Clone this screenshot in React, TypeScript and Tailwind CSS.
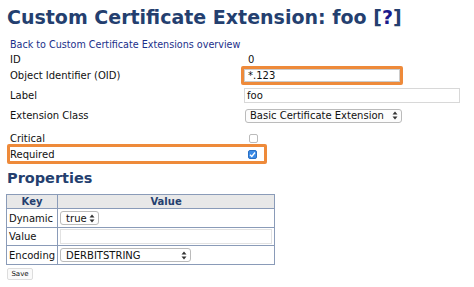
import React from "react";

const Updown = () => (
  <svg width="6" height="9" viewBox="0 0 6 9" className="shrink-0">
    <path d="M0.5 3.5 L3 0.5 L5.5 3.5 Z" fill="#333" />
    <path d="M0.5 5.5 L3 8.5 L5.5 5.5 Z" fill="#333" />
  </svg>
);

export default function App() {
  return (
    <div className="w-[474px] h-[287px] bg-white overflow-hidden font-['DejaVu_Sans',sans-serif] text-[#111] relative">
      <h1 className="pl-[7px] pt-[4px] text-[19px] leading-[26px] font-bold text-[#243f6f] whitespace-nowrap">
        Custom Certificate Extension: foo [<span className="text-[#1a1a8c]">?</span>]
      </h1>
      <div className="pl-[10px] mt-[8px] text-[9.6px] leading-[13px] text-[#1b2f8a] whitespace-nowrap">
        Back to Custom Certificate Extensions overview
      </div>
      <div className="grid grid-cols-[236px_1fr] pl-[10px] mt-[2px] text-[10px] leading-[13px]">
        <div className="h-[12px] flex items-center">ID</div>
        <div className="h-[12px] pl-[2px] flex items-center">0</div>

        <div className="h-[20px] flex items-center">Object Identifier (OID)</div>
        <div className="h-[20px] flex items-center -ml-[5px]">
          <div className="border-[3px] border-[#ee8a3a] rounded-[2px] w-[162px] h-[19px]">
            <div className="bg-white border border-[#ccc] h-full pl-[3px] flex items-center">*.123</div>
          </div>
        </div>

        <div className="h-[21px] flex items-center">Label</div>
        <div className="h-[21px] flex items-center -ml-[2px]">
          <div className="border border-[#d8d8d8] w-[216px] h-[15px] pl-[2px] flex items-center">foo</div>
        </div>

        <div className="h-[19px] flex items-center">Extension Class</div>
        <div className="h-[19px] flex items-center -ml-[1px]">
          <div className="border border-[#bbb] rounded-[3px] w-[157px] h-[14px] pl-[4px] pr-[3px] flex items-center justify-between bg-[#fcfcfc]">
            <span>Basic Certificate Extension</span>
            <Updown />
          </div>
        </div>

        <div className="h-[7px]"></div>
        <div className="h-[7px]"></div>

        <div className="h-[12px] flex items-center">Critical</div>
        <div className="h-[12px] flex items-center pl-[3px]">
          <div className="w-[9px] h-[9px] border border-[#bbb] rounded-[2px] bg-white"></div>
        </div>
      </div>

      <div className="ml-[7px] w-[260px] h-[20px] border-[3px] border-[#ee8a3a] rounded-[2px] flex items-center text-[10px] leading-[13px] relative">
        <span>Required</span>
        <div className="absolute left-[238px] top-[3px] w-[9px] h-[9px] rounded-[2px] bg-[#3c8be6] border border-[#2a6fc4] flex items-center justify-center">
          <svg width="7" height="7" viewBox="0 0 7 7">
            <path d="M1 3.8 L2.8 5.5 L6 1.5" stroke="white" strokeWidth="1.3" fill="none" />
          </svg>
        </div>
      </div>

      <h2 className="pl-[7px] mt-[4px] text-[14.5px] leading-[20px] font-bold text-[#243f6f]">Properties</h2>

      <table className="ml-[6px] mt-[6px] border-collapse text-[10px] leading-[13px] w-[269px]">
        <thead>
          <tr className="h-[14px]">
            <th className="border border-[#8a9bb8] bg-[#e8e8e8] text-[#243f6f] font-bold w-[47px] p-0">Key</th>
            <th className="border border-[#8a9bb8] bg-[#e8e8e8] text-[#243f6f] font-bold p-0">Value</th>
          </tr>
        </thead>
        <tbody>
          <tr className="h-[19px]">
            <td className="border border-[#8a9bb8] px-[2px] py-0">Dynamic</td>
            <td className="border border-[#8a9bb8] px-[2px] py-0">
              <div className="border border-[#bbb] rounded-[3px] w-[39px] h-[14px] pl-[5px] pr-[3px] flex items-center justify-between">
                <span>true</span>
                <Updown />
              </div>
            </td>
          </tr>
          <tr className="h-[18px]">
            <td className="border border-[#8a9bb8] px-[2px] py-0">Value</td>
            <td className="border border-[#8a9bb8] px-[2px] py-0">
              <div className="border border-[#e2e2e2] w-full h-[15px]"></div>
            </td>
          </tr>
          <tr className="h-[19px]">
            <td className="border border-[#8a9bb8] px-[2px] py-0">Encoding</td>
            <td className="border border-[#8a9bb8] px-[2px] py-0">
              <div className="border border-[#bbb] rounded-[3px] w-[131px] h-[14px] pl-[5px] pr-[3px] flex items-center justify-between">
                <span>DERBITSTRING</span>
                <Updown />
              </div>
            </td>
          </tr>
        </tbody>
      </table>
      <div className="ml-[7px] mt-[3px] w-[26px] h-[12px] border border-[#ddd] rounded-[2px] bg-[#fafafa] text-[7px] leading-[10px] flex items-center justify-center">
        Save
      </div>
    </div>
  );
}
